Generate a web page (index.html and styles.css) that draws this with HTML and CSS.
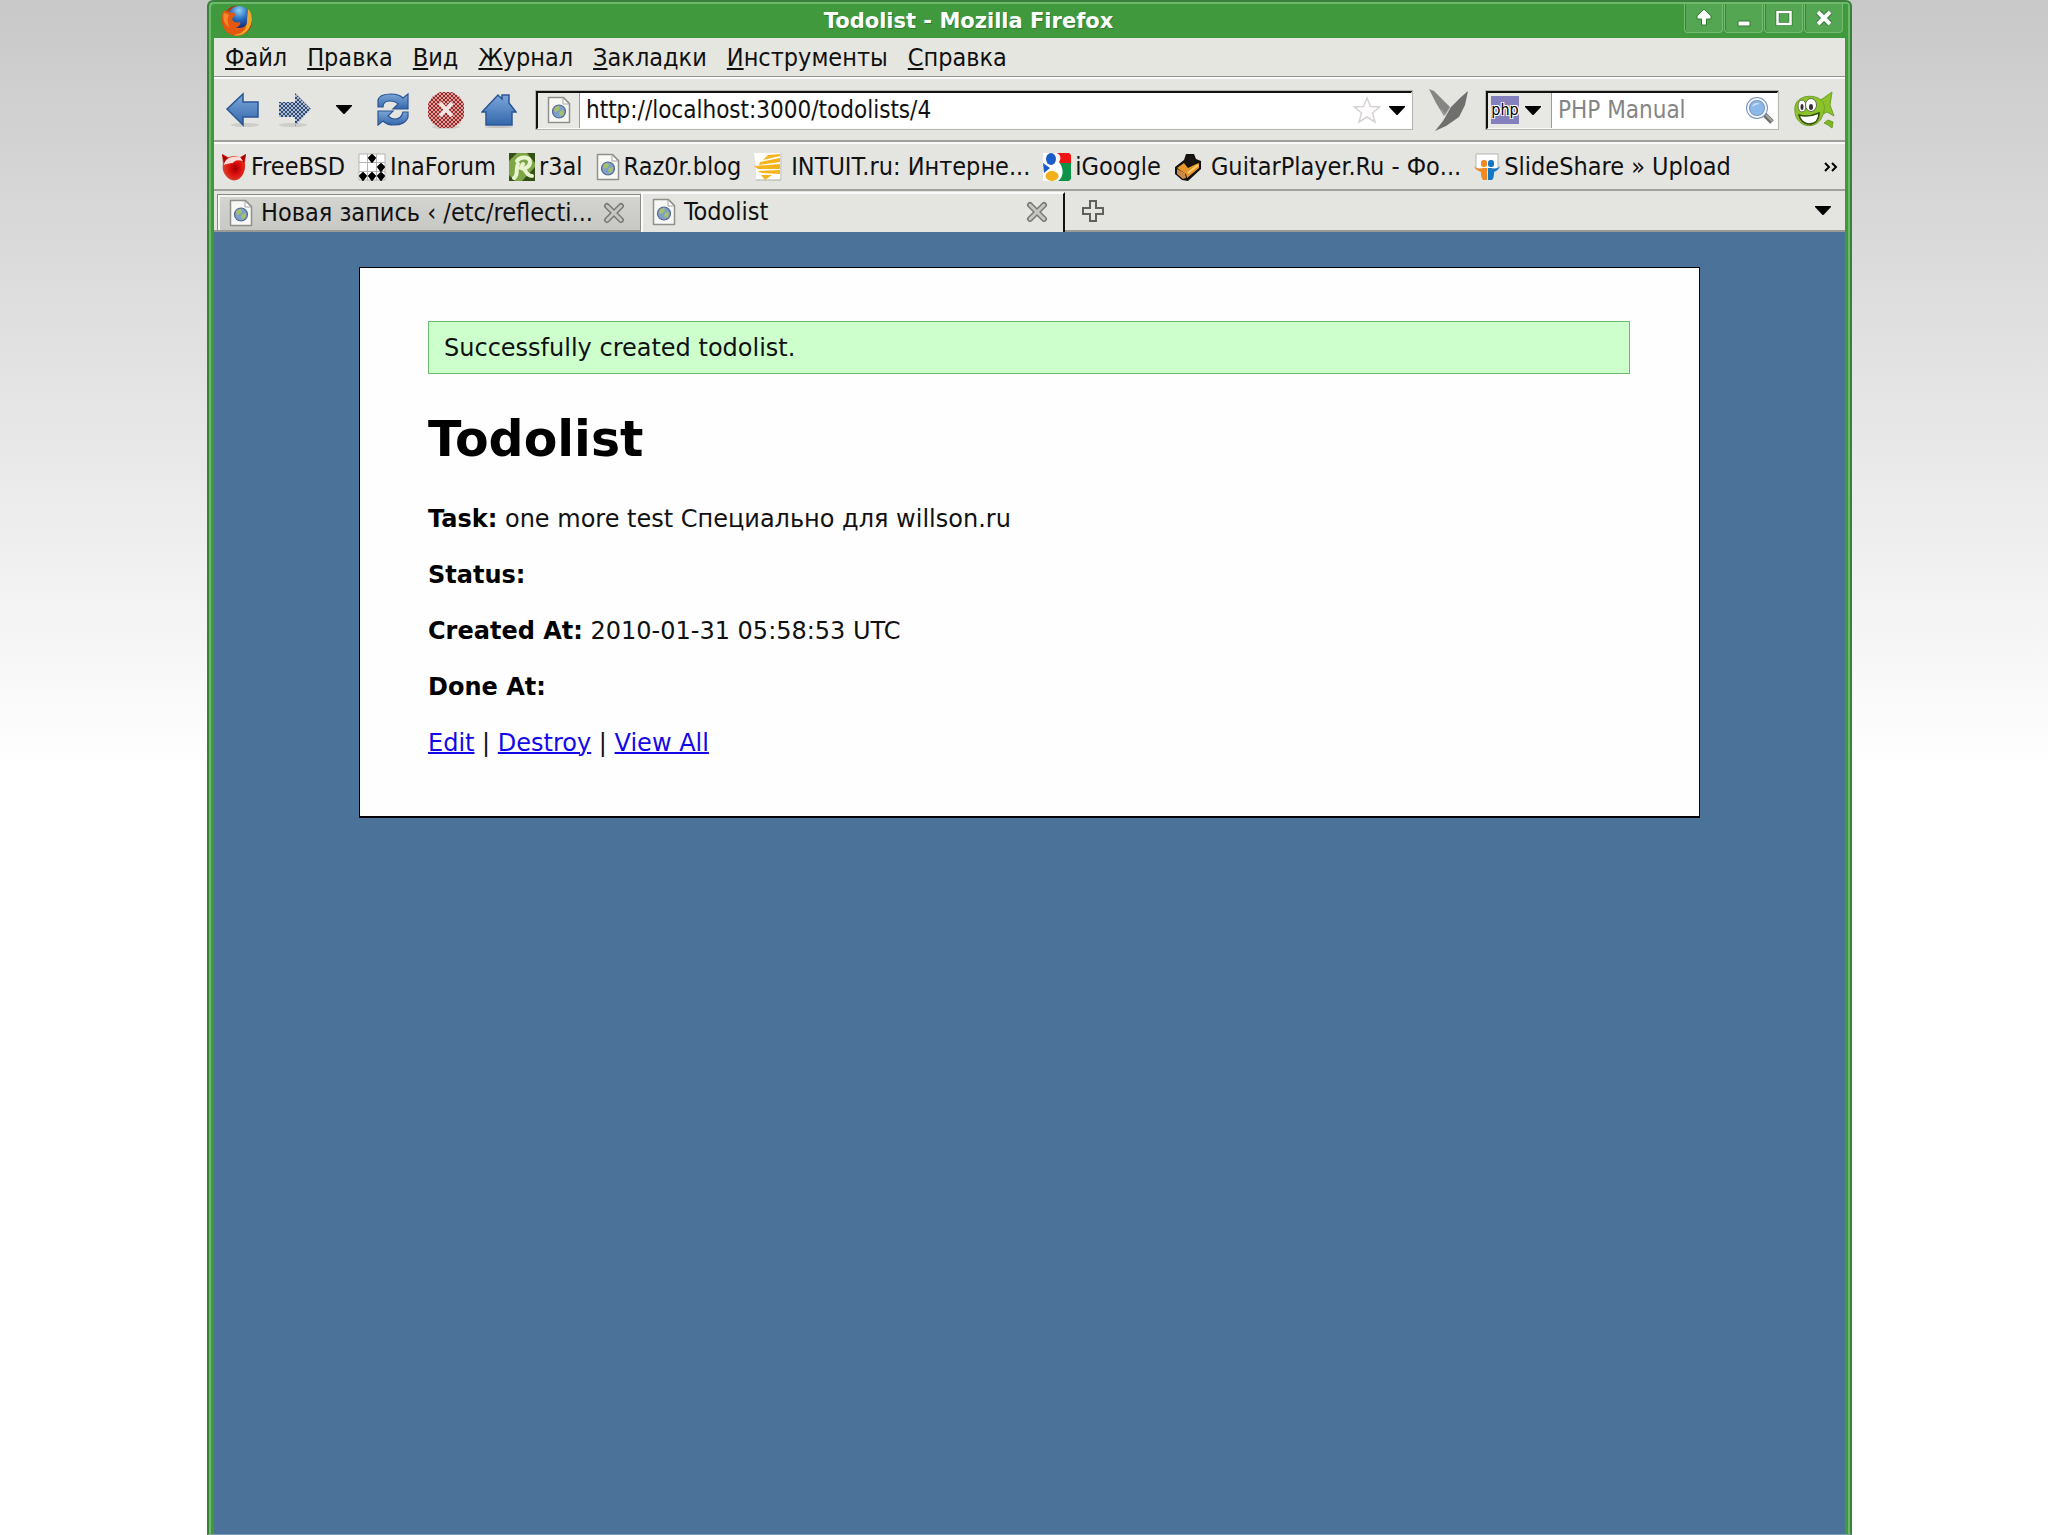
FILE: index.html
```html
<!DOCTYPE html>
<html lang="ru">
  <head>
    <meta charset="UTF-8" />
    <meta name="viewport" content="width=device-width, initial-scale=1.0" />
    <title>Todolist</title>
    <link rel="stylesheet" href="styles.css">
  </head>
  <body>
    <!-- Shared icons -->
    <svg class="sprite" width="0" height="0">
      <defs>
        <linearGradient id="blue" x1="0" y1="0" x2="0" y2="1">
          <stop offset="0" stop-color="#7ba6d8" />
          <stop offset="1" stop-color="#3567ac" />
        </linearGradient>
        <pattern id="dither-blue" width="4" height="4" patternUnits="userSpaceOnUse">
          <rect width="4" height="4" fill="#b3bccb" />
          <path d="M0 0h2v2H0zM2 2h2v2H2z" fill="#2c4a7c" />
        </pattern>
        <pattern id="dither-red" width="4" height="4" patternUnits="userSpaceOnUse">
          <rect width="4" height="4" fill="#d5a5a3" />
          <path d="M0 0h2v2H0zM2 2h2v2H2z" fill="#a02422" />
        </pattern>
        <radialGradient id="fox" cx=".4" cy=".6" r=".6">
          <stop offset="0" stop-color="#ff8a1c" />
          <stop offset=".6" stop-color="#e2500f" />
          <stop offset="1" stop-color="#9c2a08" />
        </radialGradient>
        <radialGradient id="globe" cx=".5" cy=".2" r=".8">
          <stop offset="0" stop-color="#8fd0f5" />
          <stop offset=".5" stop-color="#2c6fc0" />
          <stop offset="1" stop-color="#0c2f74" />
        </radialGradient>
        <radialGradient id="devil" cx=".55" cy=".55" r=".5">
          <stop offset="0" stop-color="#a00000" />
          <stop offset=".5" stop-color="#e01010" />
          <stop offset="1" stop-color="#d8442c" />
        </radialGradient>
      </defs>
      <symbol id="page" viewBox="0 0 24 28">
        <path d="M1.500 1.500h15l6 6v19h-21z" fill="#f8f8f6" stroke="#8f8f8b" stroke-width="1.500" stroke-linejoin="round" />
        <path d="M16 2v6h6z" fill="#fff" stroke="#a5a5a1" />
        <circle cx="12" cy="15.500" r="6.500" fill="#7f9fcb" stroke="#53698f" stroke-width="1.200" />
        <path d="M8 11l4-1 1 3-2 2-3 1-1-2zM13 15l4-1-1 5-3 1-1-2z" fill="#a6c06a" />
      </symbol>
      <symbol id="close" viewBox="0 0 22 22">
        <path d="M4 4l14 14M18 4L4 18" stroke="#777775" stroke-width="6" stroke-linecap="round" />
        <path d="M4 4l14 14M18 4L4 18" stroke="#c6c6c3" stroke-width="3" stroke-linecap="round" />
      </symbol>
      <symbol id="caret" viewBox="0 0 16 9">
        <path d="M0 0h16v1L8.500 9h-1L0 1z" fill="#000" />
      </symbol>
    </svg>

    <div class="window">
      <div class="titlebar">
        <svg class="logo" width="32" height="32" viewBox="0 0 32 32">
          <circle cx="16" cy="16" r="15" fill="url(#fox)" />
          <circle cx="18" cy="12" r="11" fill="url(#globe)" />
          <path d="M27 4c6 6 5 18-3 24-4 3-9 3-12 2 8-1 14-7 14-14 0-4 1-8 1-12z" fill="#f3a52c" />
          <path d="M2 6c3 0 5 0 7 2 3-1 5 0 6 2-2 1-3 2-4 4 1 3 4 4 8 3 1 3-2 5-5 6 4 2 9 0 11-3 0 6-6 10-12 9C4 28-1 17 2 6z" fill="#e4580f" />
          <path d="M3 8c2 0 3 1 5 2-2 4-2 9 1 13-5-3-8-9-6-15z" fill="#f58a2c" />
        </svg>
        <div class="title">Todolist - Mozilla Firefox</div>
        <div class="window-buttons">
          <button class="window-btn" aria-label="Свернуть в заголовок">
            <svg width="20" height="20" viewBox="0 0 20 20"><path d="M10 1l7 7v3h-4.500v6h-5v-6H3V8z" fill="#fff" stroke="#2f7a2f" /></svg>
          </button>
          <button class="window-btn" aria-label="Свернуть">
            <svg width="20" height="20" viewBox="0 0 20 20"><path d="M4 13h12v5H4z" fill="#fff" stroke="#2f7a2f" /></svg>
          </button>
          <button class="window-btn" aria-label="Развернуть">
            <svg width="20" height="20" viewBox="0 0 20 20"><path d="M3.500 4v12h13V4z" fill="none" stroke="#2f7a2f" stroke-width="4" /><path d="M3.500 4v12h13V4z" fill="none" stroke="#fff" stroke-width="2.500" /></svg>
          </button>
          <button class="window-btn" aria-label="Закрыть">
            <svg width="20" height="20" viewBox="0 0 20 20"><path d="M4 4l12 12M16 4L4 16" stroke="#2f7a2f" stroke-width="6" /><path d="M4 4l12 12M16 4L4 16" stroke="#fff" stroke-width="4" /></svg>
          </button>
        </div>
      </div>

      <div class="menubar">
        <button><u>Ф</u>айл</button>
        <button><u>П</u>равка</button>
        <button><u>В</u>ид</button>
        <button><u>Ж</u>урнал</button>
        <button><u>З</u>акладки</button>
        <button><u>И</u>нструменты</button>
        <button><u>С</u>правка</button>
      </div>

      <div class="toolbar">
        <div class="nav-buttons">
          <button aria-label="Назад">
            <svg width="36" height="38" viewBox="0 0 36 38"><ellipse cx="20" cy="34" rx="14" ry="2" fill="#cdcdc9" /><path d="M2 18L18 3v8h15v15H18v8z" fill="url(#blue)" stroke="#2a5595" stroke-width="1.500" /></svg>
          </button>
          <button aria-label="Вперёд">
            <svg width="36" height="38" viewBox="0 0 36 38"><ellipse cx="16" cy="34" rx="14" ry="2" fill="#cdcdc9" /><path d="M34 18L18 2v9H2v15h16v9z" fill="url(#dither-blue)" /></svg>
          </button>
          <button class="history" aria-label="История">
            <svg width="16" height="9"><use href="#caret" /></svg>
          </button>
          <button aria-label="Обновить">
            <svg width="36" height="38" viewBox="0 0 36 38">
              <path d="M3 16V9c1-4 6-6 13-6 5 0 9 1 12 4l5-4v15H18l5-5c-2-2-5-3-8-3-4 0-7 2-7 6z" fill="url(#blue)" stroke="#2a5595" stroke-width="1.200" />
              <path d="M33 21v5c-1 5-7 8-14 8-5 0-8-1-11-4l-5 4V20h15l-5 5c2 2 4 3 7 3 4 0 7-3 8-7z" fill="url(#blue)" stroke="#2a5595" stroke-width="1.200" />
            </svg>
          </button>
          <button aria-label="Остановить">
            <svg width="38" height="38" viewBox="0 0 38 38"><ellipse cx="19" cy="36" rx="14" ry="2" fill="#cdcdc9" /><path d="M13 1h12l8 5 4 7v12l-4 7-8 5H13l-8-5-4-7V13l4-7z" fill="url(#dither-red)" /><path d="M13 12l12 13M25 12L13 25" stroke="#f1e4e3" stroke-width="4" /></svg>
          </button>
          <button aria-label="Домой">
            <svg width="36" height="38" viewBox="0 0 36 38"><path d="M1 21L17 4l4 4V4h7v8l7 9h-4v13H5V21z" fill="url(#blue)" stroke="#2a5595" stroke-width="1.500" /><ellipse cx="18" cy="36" rx="14" ry="1" fill="#c4c4c0" /></svg>
          </button>
        </div>

        <div class="field url-bar">
          <button class="identity" aria-label="Сведения о сайте">
            <svg width="24" height="28"><use href="#page" /></svg>
          </button>
          <input type="text" aria-label="Адрес" value="http://localhost:3000/todolists/4">
          <button aria-label="Добавить в закладки">
            <svg width="28" height="28" viewBox="0 0 28 28"><path d="M14 2l3.500 8.500 9 .5-7 6 2.500 9-8-5-8 5 2.500-9-7-6 9-.5z" fill="#fff" stroke="#d8d2d2" stroke-width="1.500" /></svg>
          </button>
          <button class="drop" aria-label="Показать список адресов">
            <svg width="16" height="9"><use href="#caret" /></svg>
          </button>
        </div>

        <button class="bird" aria-label="Перевод">
          <svg width="42" height="44" viewBox="0 0 42 44"><path d="M1 1l5 2 16 16-6 9-8-13z" fill="#858583" /><path d="M40 3l-3 14-6 12-13 9-11 5 8-10 8-14 9-9z" fill="#6f6f6d" /><path d="M22 19l-5 8-4-6" fill="none" stroke="#a5a5a2" /></svg>
        </button>

        <div class="field search-bar">
          <button class="engine" aria-label="Поисковая система">
            <span class="php">php</span>
            <svg width="16" height="9"><use href="#caret" /></svg>
          </button>
          <input type="text" aria-label="Поиск" placeholder="PHP Manual">
          <button aria-label="Искать">
            <svg width="28" height="28" viewBox="0 0 28 28"><path d="M18 18l8 8" stroke="#6b6b69" stroke-width="5" /><path d="M20 19l6 6" stroke="#a8a8a6" stroke-width="2" /><circle cx="11" cy="12" r="9" fill="#8db8ec" stroke="#7a94bb" stroke-width="4" /><circle cx="11" cy="12" r="9" fill="none" stroke="#f2f5fa" stroke-width="2" /><path d="M6 11c1-4 5-5 8-3-3 0-5 1-8 3z" fill="#cfe2fa" /></svg>
          </button>
        </div>

        <button class="frog" aria-label="Дополнение">
          <svg width="42" height="38" viewBox="0 0 42 38">
            <path d="M24 10c5-1 9-5 15-9l-2 13 4 11-7-4-6 3z" fill="#8cc32a" stroke="#6f9f2a" />
            <path d="M31 32l4-3 5 2-1 6-4-3z" fill="#7fb524" stroke="#6f9f2a" />
            <path d="M2 20C1 14 4 9 9 7c5-3 15-2 19 2 5 4 4 12 0 19-5 8-15 8-20 4-4-3-6-7-6-12z" fill="#8cc32a" stroke="#6f9f2a" />
            <ellipse cx="9" cy="15" rx="4" ry="6" fill="#fff" stroke="#5f6f4a" />
            <ellipse cx="18" cy="14" rx="5.500" ry="6.500" fill="#fff" stroke="#5f6f4a" />
            <ellipse cx="9" cy="16" rx="1.500" ry="3" fill="#333" />
            <ellipse cx="18" cy="16" rx="2" ry="3" fill="#333" />
            <path d="M6 24c6 2 13 1 20-2 0 7-4 11-10 11-5 0-9-4-10-9z" fill="#fff" stroke="#35500f" stroke-width="1.500" />
          </svg>
        </button>
      </div>

      <div class="bookmarks">
        <a href="#">
          <svg width="26" height="28" viewBox="0 0 26 28"><path d="M1 1l6 3 6-1 6 1 6-3-1 9c1 8-3 14-6 16-3 2-8 2-11-1-5-5-6-9-5-14z" fill="url(#devil)" /><path d="M1 1l6 4-4 5zM25 1l-6 4 4 5z" fill="#a00" /><path d="M3 12c1-7 7-9 16-8l3 4c-6-2-9 0-10 2-4 0-7 1-9 2z" fill="#fbdcd8" /></svg>
          FreeBSD
        </a>
        <a href="#">
          <svg width="28" height="28" viewBox="0 0 28 28"><path d="M1 1h26v26H1zM9.500 1v26M18.500 1v26M1 9.500h26M1 18.500h26" fill="#fff" stroke="#b5b5b1" /><g fill="#000"><path d="M14 2l3 3-3 4-3-4zM23 11l3 3-3 4-3-4zM5 20l3 3-3 4-3-4zM14 20l3 3-3 4-3-4zM23 20l3 3-3 4-3-4z" stroke="#000" stroke-width="2" stroke-linejoin="round" /></g></svg>
          InaForum
        </a>
        <a href="#">
          <svg width="26" height="28" viewBox="0 0 26 28"><rect width="26" height="28" rx="2" fill="#7fa646" /><path d="M0 0h8L0 8zM18 0h8v10zM26 14v14H13zM0 22v6h6z" fill="#345016" /><path d="M5 25c5-3 1-9 4-14M8 8c3-5 14-5 13 2-1 5-7 6-9 5 1-2 1-3 2-4M15 16c2 2 3 7 8 7" fill="none" stroke="#e8f3d0" stroke-width="4" stroke-linecap="round" /></svg>
          r3al
        </a>
        <a href="#">
          <svg width="24" height="28"><use href="#page" /></svg>
          Raz0r.blog
        </a>
        <a href="#" class="wide">
          <svg width="28" height="28" viewBox="0 0 28 28"><path d="M0 0h28v27H2V14z" fill="#fff" /><path d="M27 0v27H2" fill="none" stroke="#aaaaa6" /><path d="M14 2l12-1v2L9 7zM6 9l20-4v4L5 12zM0 13l26-2v5L4 16zM3 18l23-1v4L8 20zM7 22l11 0-7 5z" fill="#f7b31c" /></svg>
          INTUIT.ru: Интерне...
        </a>
        <a href="#">
          <svg width="28" height="28" viewBox="0 0 28 28"><path d="M0 0h14v28H0z" fill="#fff" /><path d="M14 0h12l2 2v8H16z" fill="#f01414" /><path d="M16 10h12v16l-2 2H14z" fill="#0e9448" /><path d="M0 10l7 5-6 5z" fill="#1c5cc8" /><path d="M12 0c5 0 7 5 4 9 4 5 6 14-1 19H3v-8l7-6-5-6 1-8z" fill="#fff" /><ellipse cx="8" cy="6" rx="5" ry="6" fill="#1c5cc8" /><ellipse cx="9" cy="23" rx="6.500" ry="5" fill="#f2b01c" /></svg>
          iGoogle
        </a>
        <a href="#" class="wide">
          <svg width="28" height="28" viewBox="0 0 28 28"><path d="M1 14l9-7 2-6h8l2 5 5 2v8L14 28l-6-1-7-6z" fill="#111" /><path d="M3 15l7-5 4 5 6-3 5-2v5L13 25l-1-4z" fill="#e8962a" /><path d="M3 16l8 4 1 5-3 1-6-5z" fill="#c98a4a" /><path d="M10 8l4 6 6-3 2-3-3-5h-5z" fill="#1a1510" /><path d="M14 20l10-8" stroke="#ffcf72" stroke-width="2" /></svg>
          GuitarPlayer.Ru - Фо...
        </a>
        <a href="#">
          <svg width="26" height="28" viewBox="0 0 26 28"><path d="M2 1h22v15H2z" fill="#fff" stroke="#b5b5b1" /><rect x="7" y="7" width="6" height="7" rx="2.500" fill="#f08a24" /><rect x="14" y="7" width="6" height="7" rx="2.500" fill="#1478c4" /><path d="M0 13c3 3 6 3 9 2h4v12H9c-2-2-2-5-2-8-3-1-6-3-7-6z" fill="#f08a24" /><path d="M26 13c-3 3-6 3-9 2h-3v12h4c2-2 2-5 2-8 3-1 5-3 6-6z" fill="#1478c4" /></svg>
          SlideShare » Upload
        </a>
        <button class="more" aria-label="Показать остальные закладки">
          <svg width="14" height="10" viewBox="0 0 14 10"><path d="M1 1l4 4-4 4M8 1l4 4-4 4" fill="none" stroke="#000" stroke-width="2" /></svg>
        </button>
      </div>

      <div class="tabs">
        <div class="tab">
          <svg width="24" height="28"><use href="#page" /></svg>
          <span>Новая запись ‹ /etc/reflecti...</span>
          <button aria-label="Закрыть вкладку"><svg width="22" height="22"><use href="#close" /></svg></button>
        </div>
        <div class="tab active">
          <svg width="24" height="28"><use href="#page" /></svg>
          <span>Todolist</span>
          <button aria-label="Закрыть вкладку"><svg width="22" height="22"><use href="#close" /></svg></button>
        </div>
        <button class="new-tab" aria-label="Новая вкладка">
          <svg width="22" height="22" viewBox="0 0 22 22"><path d="M8 1h6v7h7v6h-7v7H8v-7H1V8h7z" fill="#e4e4e1" stroke="#60605e" stroke-width="2" /></svg>
        </button>
        <button class="all-tabs" aria-label="Список вкладок">
          <svg width="16" height="9"><use href="#caret" /></svg>
        </button>
      </div>

      <div class="page">
        <div class="container">
          <div class="flash">Successfully created todolist.</div>
          <h1>Todolist</h1>
          <p><strong>Task:</strong> one more test Специально для willson.ru</p>
          <p><strong>Status:</strong></p>
          <p><strong>Created At:</strong> 2010-01-31 05:58:53 UTC</p>
          <p><strong>Done At:</strong></p>
          <p>
            <a href="#">Edit</a> |
            <a href="#">Destroy</a> |
            <a href="#">View All</a>
          </p>
        </div>
      </div>
    </div>
  </body>
</html>
```
FILE: styles.css
```css
* {
  box-sizing: border-box;
}

body {
  margin: 0;
  background: #fff linear-gradient(#c9c8c9, #cdcdcd 60px, #dedede 300px, #f0f0f0 560px, #fff 770px) no-repeat;
  font-family: "DejaVu Sans Condensed", "DejaVu Sans", sans-serif;
  font-size: 25px;
  line-height: 28px;
  color: #111;
}

button {
  display: flex;
  align-items: center;
  padding: 0;
  border: none;
  background: none;
  font: inherit;
  color: inherit;
}

svg {
  display: block;
  flex: none;
}

.sprite {
  position: absolute;
}

.window {
  display: flex;
  flex-direction: column;
  min-height: 100vh;
  margin: 0 196px 0 207px;
  padding: 0 5px;
  border: 2px solid #39803a;
  border-bottom: 1px solid #8a9aa8;
  border-radius: 6px 6px 0 0;
  background: #409a3d;
  box-shadow: inset 2px 2px #6db86a, inset -2px 0 #6db86a;
}

.titlebar {
  display: flex;
  align-items: center;
  height: 36px;
  padding: 2px 2px 0 7px;
}

.title {
  flex: 1;
  text-align: center;
  font-family: "DejaVu Sans", sans-serif;
  font-size: 21px;
  font-weight: bold;
  color: #fff;
  text-shadow: 1px 1px #2f7a2f;
}

.window-buttons {
  display: flex;
  align-self: flex-start;
  gap: 1px;
}

.window-btn {
  justify-content: center;
  width: 39px;
  height: 29px;
  border: 1px solid #74bb71;
  border-top: none;
  border-radius: 0 0 4px 4px;
  background: #55a652;
  box-shadow: inset 1px 0 #36862f;
}

.menubar {
  display: flex;
  height: 39px;
  padding-left: 1px;
  border-bottom: 1px solid #949491;
  background: #e6e6e0;
}

.menubar button {
  padding: 1px 10px 0;
}

.menubar u {
  text-decoration-thickness: 2px;
  text-underline-offset: 2px;
}

.toolbar {
  display: flex;
  align-items: center;
  height: 65px;
  padding: 0 10px 0 11px;
  border-top: 2px solid #fafafa;
  border-bottom: 2px solid #a0a09d;
  background: #e4e4e1;
}

.nav-buttons {
  display: flex;
  gap: 16px;
  width: 310px;
}

.nav-buttons .history {
  margin: 0 7px;
}

.field {
  display: flex;
  align-items: center;
  height: 40px;
  border: 2px solid #fafafa;
  border-top: 3px solid #111;
  border-left: 3px solid #111;
  outline: 1px solid #b5b5b2;
  outline-offset: -1px;
  background: #fff;
}

.field input {
  flex: 1;
  min-width: 0;
  padding: 0 6px;
  border: none;
  outline: none;
  background: none;
  font: inherit;
  font-size: 24px;
  color: #111;
}

.field input::placeholder {
  color: #858585;
  opacity: 1;
}

.url-bar {
  flex: 1;
}

.identity {
  justify-content: center;
  width: 42px;
  height: 100%;
  border-right: 1px solid #9a9a97;
  background: #e8e8e5;
}

.drop {
  margin: 0 6px 0 8px;
}

.bird {
  margin: 0 15px;
}

.search-bar {
  width: 294px;
}

.engine {
  gap: 6px;
  height: 100%;
  padding: 0 10px 0 3px;
  border-right: 1px solid #9a9a97;
  background: #e8e8e5;
}

.php {
  width: 28px;
  height: 28px;
  background: #8480bd;
  font-size: 16px;
  line-height: 28px;
  text-align: center;
  color: #000;
  text-shadow: 1px 1px #fff, -1px -1px #fff, 1px -1px #fff, -1px 1px #fff;
}

.search-bar button:last-child {
  margin-right: 3px;
}

.frog {
  margin-left: 14px;
}

.bookmarks {
  display: flex;
  align-items: center;
  height: 49px;
  gap: 13px;
  padding: 0 7px;
  border-top: 2px solid #fafafa;
  border-bottom: 2px solid #a0a09d;
  background: #e4e4e1;
}

.bookmarks a {
  display: flex;
  align-items: center;
  gap: 4px;
  color: inherit;
  text-decoration: none;
  white-space: nowrap;
}

.bookmarks .wide {
  gap: 9px;
}

.more {
  margin-left: auto;
}

.tabs {
  display: flex;
  align-items: center;
  height: 41px;
  padding: 0 14px 0 3px;
  border-bottom: 2px solid #9a9a97;
  background: #e4e4e1;
}

.tab {
  display: flex;
  align-items: center;
  align-self: flex-end;
  width: 424px;
  height: 36px;
  padding: 1px 15px 0 11px;
  border: 1px solid #8a8a87;
  border-bottom: none;
  background: linear-gradient(#d4d4d1, #c8c8c4);
  box-shadow: inset 2px 2px #f5f5f3;
}

.tab span {
  flex: 1;
  padding-left: 8px;
  white-space: nowrap;
}

.tab.active {
  height: 40px;
  margin-bottom: -2px;
  padding: 0 15px 2px 9px;
  border: none;
  border-top: 2px solid #fafafa;
  border-left: 2px solid #fafafa;
  border-right: 2px solid #111;
  background: #e4e4e1;
  box-shadow: none;
}

.new-tab {
  margin-left: 17px;
}

.all-tabs {
  margin-left: auto;
}

.page {
  flex: 1;
  padding: 35px 145px;
  background: #4b7399;
  font-family: Verdana, "DejaVu Sans", sans-serif;
  font-size: 24px;
}

.container {
  padding: 53px 69px 59px 68px;
  border: 1px solid #000;
  border-bottom-width: 2px;
  background: #fefefe;
}

.flash {
  padding: 12px 15px 11px;
  border: 1px solid #6cba6c;
  background: #ccffcc;
}

h1 {
  margin: 37px 0 36px;
  font-size: 49px;
  line-height: 58px;
  color: #000;
}

p {
  margin: 28px 0;
}

strong {
  color: #000;
}

.container p:last-child {
  margin-bottom: 0;
}

.page a {
  color: #1208e8;
  text-decoration-thickness: 2px;
}
```
